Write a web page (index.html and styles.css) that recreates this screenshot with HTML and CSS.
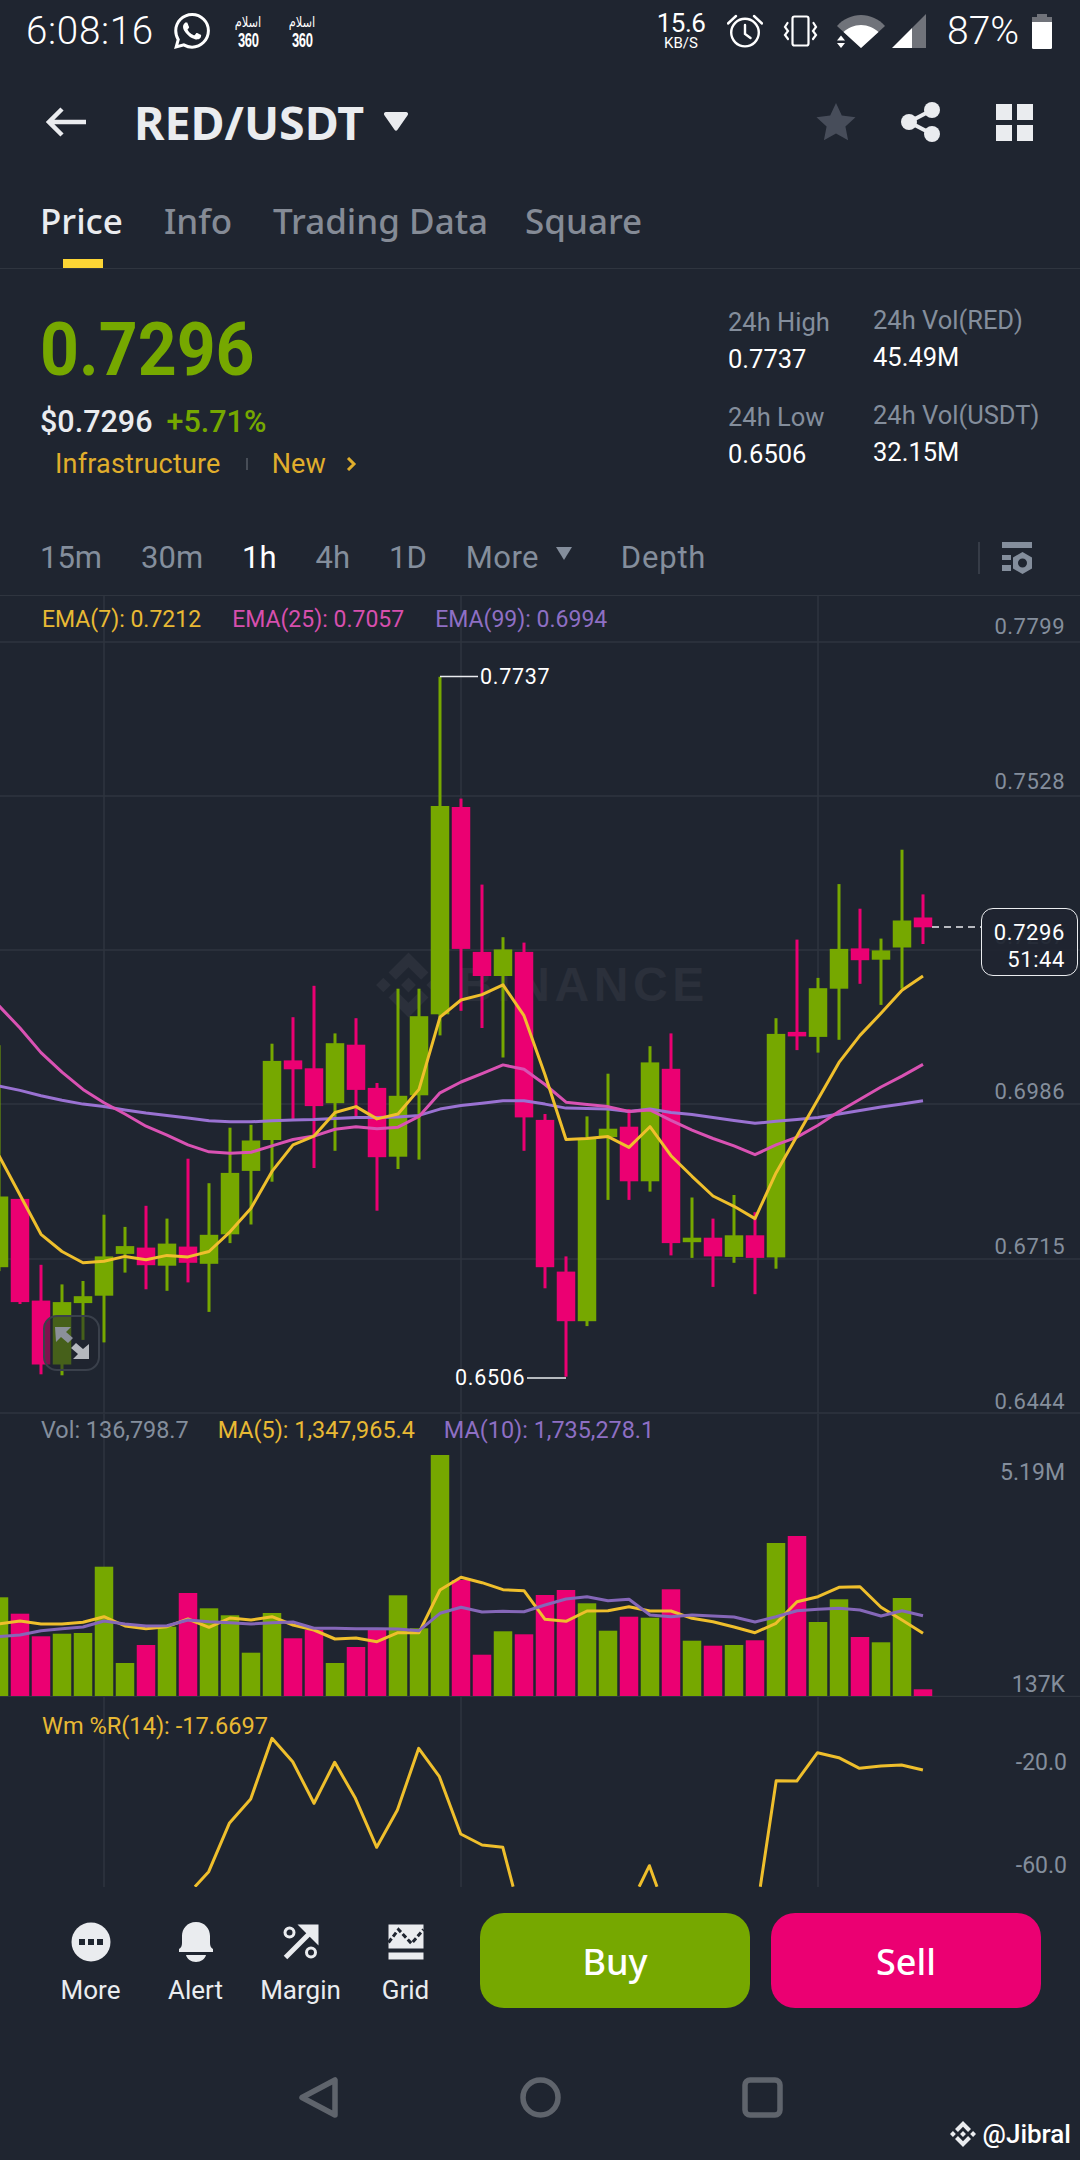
FILE: index.html
```html
<!DOCTYPE html>
<html lang="en">
<head>
<meta charset="utf-8">
<title>RED/USDT</title>
<link rel="stylesheet" href="styles.css">
</head>
<body>
<div class="app">
  <div class="status">
    <span class="clock">6:08:16</span>
    <svg class="i-wa" viewBox="0 0 24 24"><path fill="#fff" d="M17.472 14.382c-.297-.149-1.758-.867-2.03-.967-.273-.099-.471-.148-.67.15-.197.297-.767.966-.94 1.164-.173.199-.347.223-.644.075-.297-.15-1.255-.463-2.39-1.475-.883-.788-1.48-1.761-1.653-2.059-.173-.297-.018-.458.13-.606.134-.133.298-.347.446-.52.149-.174.198-.298.298-.497.099-.198.05-.371-.025-.52-.075-.149-.669-1.612-.916-2.207-.242-.579-.487-.5-.669-.51-.173-.008-.371-.01-.57-.01-.198 0-.52.074-.792.372-.272.297-1.04 1.016-1.04 2.479 0 1.462 1.065 2.875 1.213 3.074.149.198 2.096 3.2 5.077 4.487.709.306 1.262.489 1.694.625.712.227 1.36.195 1.871.118.571-.085 1.758-.719 2.006-1.413.248-.694.248-1.289.173-1.413-.074-.124-.272-.198-.57-.347m-5.421 7.403h-.004a9.87 9.87 0 01-5.031-1.378l-.361-.214-3.741.982.998-3.648-.235-.374a9.86 9.86 0 01-1.51-5.26c.001-5.45 4.436-9.884 9.888-9.884 2.64 0 5.122 1.03 6.988 2.898a9.825 9.825 0 012.893 6.994c-.003 5.45-4.437 9.884-9.885 9.884m8.413-18.297A11.815 11.815 0 0012.05 0C5.495 0 .16 5.335.157 11.892c0 2.096.547 4.142 1.588 5.945L.057 24l6.305-1.654a11.882 11.882 0 005.683 1.448h.005c6.554 0 11.89-5.335 11.893-11.893a11.821 11.821 0 00-3.48-8.413z"/></svg>
    <span class="islam"><span class="islam-ar">اسلام</span><span class="islam-num">360</span></span>
    <span class="islam islam-2"><span class="islam-ar">اسلام</span><span class="islam-num">360</span></span>
    <span class="speed"><span class="speed-val">15.6</span><span class="speed-unit">KB/S</span></span>
    <svg class="i-alarm" viewBox="0 0 36 34" fill="none" stroke="#fff" stroke-width="2.4"><circle cx="18" cy="18.600" r="13.800"/><path d="M18 11v9l5.500 4M1 9.500 9 2M35 9.500 27 2" stroke-linecap="round"/></svg>
    <svg class="i-vib" viewBox="0 0 35 32" fill="none" stroke="#fff" stroke-width="2.2"><rect x="9.500" y="1.500" width="16" height="29" rx="2"/><path d="M4.500 8 2 12l3 4-3 4 3 4M30.500 8l2.500 4-3 4 3 4-3 4" stroke-linecap="round"/></svg>
    <svg class="i-wifi" viewBox="0 0 48 33"><path fill="#70737a" d="M24 33 0 11C6 4 15 0 24 0s18 4 24 11z"/><path fill="#fff" d="M24 33 6.500 17C11 13 17 10 24 10s13 3 17.500 7zM0 25.500h8l-4-5zM0 28h8l-4 5z"/></svg>
    <svg class="i-signal" viewBox="0 0 34 34"><path fill="#70737a" d="M34 0v34H20V14z"/><path fill="#fff" d="M20 14v20H0z"/></svg>
    <span class="pct">87%</span>
    <svg class="i-batt" viewBox="0 0 20 35"><path fill="#70737a" d="M5 0h10v3h5v5H0V3h5z"/><path fill="#fff" d="M0 8h20v25.500a1.500 1.500 0 0 1-1.500 1.500h-17A1.500 1.500 0 0 1 0 33.500z"/></svg>
  </div>

  <div class="topbar">
    <svg class="i-back" viewBox="0 0 40 30" fill="none" stroke="#eaecef" stroke-width="4.500"><path d="M40 15H4M16 2 3 15l13 13"/></svg>
    <span class="pair">RED/USDT</span>
    <svg class="i-caret" viewBox="0 0 24 19"><path fill="#eaecef" d="M2 0h20a2 2 0 0 1 1.600 3.200L13.500 17.800a2 2 0 0 1-3 0L.4 3.200A2 2 0 0 1 2 0z"/></svg>
    <svg class="i-star" viewBox="0 0 40 40"><path fill="#474d5a" d="m20 1 5.800 12.600 13.700 1.600-10.100 9.400 2.700 13.600L20 31.400 7.900 38.200l2.700-13.600L.5 15.200l13.700-1.600z"/></svg>
    <svg class="i-share" viewBox="0 0 40 40"><g fill="#eaecef"><circle cx="31" cy="8" r="8"/><circle cx="8" cy="20" r="8"/><circle cx="31" cy="32" r="8"/></g><path d="M31 8 8 20l23 12" fill="none" stroke="#eaecef" stroke-width="4"/></svg>
    <svg class="i-grid" viewBox="0 0 37 37"><path fill="#eaecef" d="M0 0h16v16H0zM21 0h16v16H21zM0 21h16v16H0zM21 21h16v16H21z"/></svg>
  </div>

  <div class="tabs">
    <span class="tab tab-on">Price</span>
    <span class="tab">Info</span>
    <span class="tab">Trading Data</span>
    <span class="tab tab-last">Square</span>
    <span class="tab-mark"></span>
  </div>

  <div class="ticker">
    <div class="quote">
      <div class="last">0.7296</div>
      <div class="fiat"><span>$0.7296</span><span class="up">+5.71%</span></div>
      <div class="tags">
        <span>Infrastructure</span><i class="tag-sep"></i><span>New</span>
        <svg class="i-chev" viewBox="0 0 12 14" fill="none" stroke="#e0ae2c" stroke-width="3"><path d="m2 1 6 6-6 6"/></svg>
      </div>
    </div>
    <div class="stats stats-a">
      <div class="stat"><span class="stat-k">24h High</span><span class="stat-v">0.7737</span></div>
      <div class="stat"><span class="stat-k">24h Low</span><span class="stat-v">0.6506</span></div>
    </div>
    <div class="stats stats-b">
      <div class="stat"><span class="stat-k">24h Vol(RED)</span><span class="stat-v">45.49M</span></div>
      <div class="stat"><span class="stat-k">24h Vol(USDT)</span><span class="stat-v">32.15M</span></div>
    </div>
  </div>

  <div class="intervals">
    <span>15m</span><span>30m</span><span class="iv-on">1h</span><span>4h</span><span>1D</span>
    <span class="iv-more">More<svg class="i-tri" viewBox="0 0 16 13"><path fill="#848e9c" d="M0 0h16L8 13z"/></svg></span>
    <span class="iv-depth">Depth</span>
    <span class="iv-tool">
      <svg class="i-tune" viewBox="0 0 32 32"><path fill="#848e9c" d="M1 0h30v6H1zM1 13h9v5H1zM1 23h9v6H1z"/><path fill="#848e9c" fill-rule="evenodd" d="M21.500 10 31 15.500v11L21.500 32 12 26.500v-11zM21.500 16.500a4.500 4.500 0 1 0 0 9 4.500 4.500 0 0 0 0-9z"/></svg>
    </span>
  </div>

  <div class="chart">
    <section class="panel panel-price">
      <div class="mark"><svg class="mark-logo" viewBox="0 0 24 24"><path fill="#2b303b" d="M7.340 10.080 12 5.420l4.660 4.660 2.710-2.710L12 0 4.630 7.370zM0 12l2.710-2.710L5.420 12l-2.710 2.710zM7.340 13.920 12 18.580l4.660-4.660 2.710 2.710L12 24l-7.370-7.370zM18.580 12l2.710-2.710L24 12l-2.710 2.710zM14.750 12 12 9.250 9.250 12 12 14.750z"/></svg><span class="mark-text">BINANCE</span></div>
      <svg class="plot" id="plot-price" viewBox="0 596 1080 818" preserveAspectRatio="none"></svg>
      <div class="legend legend-price"><span class="c-y">EMA(7): 0.7212</span><span class="c-m">EMA(25): 0.7057</span><span class="c-p">EMA(99): 0.6994</span></div>
      <div class="axis axis-price"><span>0.7799</span><span>0.7528</span><span>0.7257</span><span>0.6986</span><span>0.6715</span><span>0.6444</span></div>
      <span class="extreme extreme-hi">0.7737</span>
      <span class="extreme extreme-lo">0.6506</span>
      <div class="pricetag"><span>0.7296</span><span>51:44</span></div>
      <div class="expand"><svg viewBox="0 0 36 34"><path fill="#8b909a" d="M1 1h16l-5 5 7 6-5 5-7-6-5 5z"/><path fill="#b5b8be" d="M35 33H19l5-5-7-6 5-5 7 6 6-5z"/></svg></div>
    </section>
    <section class="panel panel-vol">
      <svg class="plot" id="plot-vol" viewBox="0 1414 1080 283" preserveAspectRatio="none"></svg>
      <div class="legend legend-vol"><span class="c-g">Vol: 136,798.7</span><span class="c-y">MA(5): 1,347,965.4</span><span class="c-p">MA(10): 1,735,278.1</span></div>
      <div class="axis axis-vol"><span>5.19M</span><span>137K</span></div>
    </section>
    <section class="panel panel-wr">
      <svg class="plot" id="plot-wr" viewBox="0 1697 1080 190" preserveAspectRatio="none"></svg>
      <div class="legend legend-wr"><span class="c-y">Wm %R(14): -17.6697</span></div>
      <div class="axis axis-wr"><span>-20.0</span><span>-60.0</span></div>
    </section>
  </div>

  <div class="actions">
    <div class="tools">
      <div class="tool"><svg class="tool-i" viewBox="0 0 40 40"><circle cx="20" cy="20" r="19.500" fill="#eaecef"/><path fill="#1f2530" d="M8 17h6v6H8zM17 17h6v6h-6zM26 17h6v6h-6z"/></svg><span>More</span></div>
      <div class="tool"><svg class="tool-i" viewBox="0 0 40 40"><path fill="#eaecef" d="M20 0C11 0 6 7 6 14v7c0 3-1 5-3 6v3h34v-3c-2-1-3-3-3-6v-7C34 7 29 0 20 0zM10 33h20c-1 4-5 7-10 7s-9-3-10-7z"/></svg><span>Alert</span></div>
      <div class="tool"><svg class="tool-i" viewBox="-2.500 -2.500 40 40"><g fill="none" stroke="#eaecef"><path d="M2 33 30 5" stroke-width="5"/><circle cx="6" cy="8" r="4.500" stroke-width="3"/><circle cx="27.500" cy="28" r="4.500" stroke-width="3"/></g><path fill="#eaecef" d="M14 0h21v21z"/></svg><span>Margin</span></div>
      <div class="tool"><svg class="tool-i" viewBox="-2.500 -2.500 40 40"><path fill="#eaecef" d="M0 0h35v24H0zM0 28h35v7H0z"/><path fill="none" stroke="#1f2530" stroke-width="3" stroke-dasharray="5 2.500" d="M0 18 10 5l13 14L35 5"/></svg><span>Grid</span></div>
    </div>
    <button class="trade trade-buy">Buy</button>
    <button class="trade trade-sell">Sell</button>
  </div>

  <div class="sysnav">
    <svg class="sys-i" viewBox="0 0 41 41" fill="none" stroke="#5f646c" stroke-width="5.500" stroke-linejoin="round"><path d="M37 3v35L4 20.500z"/></svg>
    <svg class="sys-i" viewBox="0 0 41 41" fill="none" stroke="#5f646c" stroke-width="5.500"><circle cx="20.500" cy="20.500" r="17.500"/></svg>
    <svg class="sys-i" viewBox="0 0 41 41" fill="none" stroke="#5f646c" stroke-width="5.500"><rect x="3" y="3" width="35" height="35" rx="5"/></svg>
    <div class="credit"><svg class="credit-logo" viewBox="0 0 24 24"><path fill="#eaecef" d="M7.340 10.080 12 5.420l4.660 4.660 2.710-2.710L12 0 4.630 7.370zM0 12l2.710-2.710L5.420 12l-2.710 2.710zM7.340 13.920 12 18.580l4.660-4.660 2.710 2.710L12 24l-7.370-7.370zM18.580 12l2.710-2.710L24 12l-2.710 2.710zM14.750 12 12 9.250 9.250 12 12 14.750z"/></svg><span>@Jibral</span></div>
  </div>
</div>
<script src="chart.js"></script>
</body>
</html>
```
FILE: styles.css
```css
* { box-sizing: border-box; }
html, body { margin: 0; padding: 0; }
body { background: #1f2530; }
.app {
  width: 1080px; height: 2160px; background: #1f2530; overflow: hidden;
  display: flex; flex-direction: column;
  font-family: Roboto, "Liberation Sans", sans-serif; color: #eaecef;
}
svg { display: block; flex: none; }

/* status bar */
.status { height: 74px; padding: 0 28px 12px 26px; display: flex; align-items: center; color: #fff; flex: none; }
.clock { font-size: 38.5px; font-weight: 300; line-height: 40px; width: 126px; letter-spacing: .7px; white-space: nowrap; }
.i-wa { width: 36px; height: 36px; margin-left: 22px; }
.islam { width: 28px; margin-left: 24px; display: flex; flex-direction: column; align-items: center; gap: 4px; }
.islam-2 { margin-left: 26px; }
.islam-ar { font: 12px/14px "DejaVu Sans", sans-serif; white-space: nowrap; transform: scale(.95, 1.2); }
.islam-num { font: 700 18px/15px "Liberation Sans", sans-serif; letter-spacing: -.5px; transform: scale(.72, 1.15); }
.speed { margin-left: auto; width: 46px; display: flex; flex-direction: column; align-items: center; }
.speed-val { font-size: 26px; line-height: 22px; letter-spacing: -.5px; }
.speed-unit { font-size: 15px; line-height: 14px; margin-top: 2px; }
.i-alarm { width: 36px; height: 34px; margin-left: 23px; }
.i-vib { width: 35px; height: 32px; margin-left: 20px; }
.i-wifi { width: 48px; height: 33px; margin-left: 19px; }
.i-signal { width: 34px; height: 34px; margin-left: 7px; }
.pct { font-size: 39px; font-weight: 300; line-height: 40px; margin-left: 21px; width: 71px; white-space: nowrap; }
.i-batt { width: 20px; height: 35px; margin-left: 14px; }

/* top bar */
.topbar { height: 96px; padding: 0 47px 0 46px; display: flex; align-items: center; flex: none; }
.i-back { width: 40px; height: 30px; }
.pair { font: 700 46.5px/56px "Noto Sans", sans-serif; margin-left: 48px; width: 229px; white-space: nowrap; }
.i-caret { width: 24px; height: 19px; margin-left: 21px; margin-bottom: 2px; }
.i-star { width: 40px; height: 40px; margin-left: auto; }
.i-share { width: 40px; height: 40px; margin-left: 45px; }
.i-grid { width: 37px; height: 37px; margin-left: 55px; }

/* tabs */
.tabs { position: relative; height: 99px; padding: 4px 0 0 40px; border-bottom: 1px solid #2f353f; display: flex; align-items: center; gap: 41px; font: 500 35px/44px "Noto Sans", sans-serif; color: #858b96; flex: none; }
.tab-on { color: #eaecef; }
.tab-last { margin-left: -4px; }
.tab-mark { position: absolute; left: 63px; bottom: 0; width: 40px; height: 9px; background: #fcd535; }

/* ticker */
.ticker { height: 261px; display: flex; flex: none; }
.quote { width: 728px; padding: 45px 0 0 40px; flex: none; }
.last { font-size: 74px; line-height: 72px; font-weight: 700; color: #76a800; transform: scaleX(.918); transform-origin: left center; }
.fiat { margin-top: 18px; font-size: 30.5px; line-height: 36px; font-weight: 500; display: flex; gap: 14px; }
.up { color: #76a800; }
.tags { margin: 9px 0 0 15px; font-size: 27px; letter-spacing: .2px; line-height: 30px; color: #e0ae2c; display: flex; align-items: center; }
.tag-sep { width: 2px; height: 12px; background: #474d57; margin: 0 24px 0 25px; }
.i-chev { width: 12px; height: 14px; margin-left: 20px; }
.stats { display: flex; flex-direction: column; gap: 28px; flex: none; }
.stats-a { width: 145px; padding-top: 38px; }
.stats-b { padding-top: 36px; }
.stat { display: flex; flex-direction: column; gap: 7px; white-space: nowrap; }
.stat-k { font-size: 25.5px; line-height: 30px; color: #848e9c; }
.stat-v { font-size: 25.5px; line-height: 30px; color: #fff; }

/* intervals */
.intervals { height: 66px; padding: 0 47px 9px 40px; border-bottom: 1px solid #2f353f; display: flex; align-items: center; gap: 39px; font-size: 31px; line-height: 36px; color: #848e9c; flex: none; }
.iv-on { color: #fff; }
.iv-more { display: flex; align-items: flex-start; gap: 17px; letter-spacing: .4px; }
.i-tri { width: 16px; height: 13px; margin-top: 7px; }
.iv-depth { margin-left: 10px; letter-spacing: .8px; }
.iv-tool { margin-left: auto; height: 32px; padding-left: 21px; border-left: 2px solid #363c47; }
.i-tune { width: 32px; height: 32px; }

/* chart */
.chart { height: 1291px; display: flex; flex-direction: column; flex: none; }
.panel { position: relative; flex: none; }
.panel-price { height: 818px; }
.panel-vol { height: 283px; }
.panel-wr { height: 190px; }
.plot { position: absolute; inset: 0; width: 100%; height: 100%; }
.legend { position: relative; padding-left: 42px; display: flex; gap: 31px; font-size: 23px; line-height: 24px; white-space: nowrap; }
.legend-price { padding-top: 12px; }
.legend-vol { padding: 4px 0 0 41px; gap: 29px; font-size: 23.4px; }
.legend-wr { padding-top: 17px; font-size: 23.6px; }
.c-y { color: #e8b934; }
.c-m { color: #d74fae; }
.c-p { color: #8e6fc4; }
.c-g { color: #848e9c; }
.axis { position: absolute; right: 15px; display: flex; flex-direction: column; align-items: flex-end; font-size: 22px; line-height: 24px; color: #848e9c; letter-spacing: .5px; }
.axis-price { top: 19px; gap: 131px; }
.axis-vol { top: 47px; gap: 188px; font-size: 23px; letter-spacing: 0; }
.axis-wr { top: 54px; gap: 79px; font-size: 23px; letter-spacing: 0; right: 13px; }
.extreme { position: absolute; font-size: 21.5px; line-height: 24px; letter-spacing: .7px; color: #fff; }
.extreme-hi { left: 480px; top: 69px; }
.extreme-lo { left: 455px; top: 770px; }
.pricetag { position: absolute; left: 981px; top: 312px; width: 97px; height: 68px; padding: 10px 12px 0 0; border: 1.5px solid #eaecef; border-radius: 12px; background: rgba(31, 37, 48, .93); display: flex; flex-direction: column; align-items: flex-end; font-size: 22px; line-height: 27px; letter-spacing: .6px; color: #fff; }
.expand { position: absolute; left: 43px; top: 719px; width: 57px; height: 56px; border: 2px solid #3a404b; border-radius: 14px; background: rgba(31, 37, 48, .55); display: flex; align-items: center; justify-content: center; }
.expand svg { width: 36px; height: 34px; }
.mark { position: absolute; left: 376px; top: 356px; display: flex; align-items: center; gap: 17px; }
.mark-logo { width: 65px; height: 66px; }
.mark-text { font: 700 48px/50px "Liberation Sans", sans-serif; letter-spacing: 4.6px; color: #2b303b; }

/* actions */
.actions { height: 153px; padding: 26px 0 0 38px; display: flex; align-items: flex-start; flex: none; }
.tools { display: flex; width: 442px; flex: none; }
.tool { width: 105px; padding-top: 9px; display: flex; flex-direction: column; align-items: center; gap: 13px; font-size: 26px; line-height: 30px; color: #eaecef; }
.tool-i { width: 40px; height: 40px; }
.trade { width: 270px; height: 95px; border: 0; border-radius: 24px; color: #fff; font: 500 36px/44px "Noto Sans", sans-serif; padding: 3px 0 0; flex: none; }
.trade-buy { background: #76a800; }
.trade-sell { background: #eb0072; margin-left: 21px; }

/* system nav */
.sysnav { position: relative; height: 120px; padding-bottom: 5px; display: flex; align-items: center; justify-content: center; gap: 181px; flex: none; }
.sys-i { width: 41px; height: 41px; }
.credit { position: absolute; right: 9px; bottom: 10px; display: flex; align-items: center; gap: 7px; font-size: 26px; font-weight: 500; line-height: 32px; color: #fff; }
.credit-logo { width: 26px; height: 26px; }
```
FILE: chart.js
```js
(function () {
  var GREEN = '#76a800', PINK = '#eb0072', GRID = '#2f353f';
  var cx = function (i) { return 440 + (i - 20) * 21; };
  var py = function (v) { return +(640 + v / 2.036).toFixed(1); };
  var vy = function (v) { return +(1400 + v / 3).toFixed(1); };
  var wy = function (v) { return +(1690 + v / 3).toFixed(1); };

  // type, wick top, body top, body bottom, wick bottom
  var candles = [
    ['g',825,1133,1277,1285],['r',1138,1138,1348,1352],['r',1272,1345,1475,1495],['g',1312,1348,1475,1497],
    ['g',1305,1336,1350,1425],['g',1170,1255,1335,1430],['g',1195,1234,1250,1288],['r',1152,1237,1273,1322],
    ['g',1178,1229,1274,1325],['r',1056,1235,1268,1308],['g',1106,1211,1270,1368],['g',993,1085,1210,1228],
    ['g',987,1019,1081,1190],['g',822,857,1018,1103],['r',768,856,874,975],['r',704,872,949,1075],
    ['g',801,821,943,1040],['r',770,824,916,970],['r',902,912,1053,1162],['g',710,928,1052,1077],
    ['g',710,766,927,1058],['g',75,338,762,805],['r',323,340,629,755],['r',498,635,684,790],
    ['g',605,630,684,850],['r',616,635,972,1040],['r',965,977,1277,1320],['r',1255,1286,1387,1500],
    ['g',970,1015,1387,1397],['g',883,995,1012,1140],['r',955,991,1102,1140],['g',827,860,1102,1123],
    ['r',801,873,1228,1253],['g',1135,1217,1226,1258],['r',1178,1217,1255,1317],['g',1130,1212,1256,1268],
    ['r',1165,1212,1258,1332],['g',770,802,1257,1280],['r',610,798,807,835],['g',688,709,808,840],
    ['g',497,629,710,814],['r',547,628,652,700],['g',608,632,651,743],['g',427,571,626,710],
    ['r',518,565,585,619]
  ];
  var ema7 = [1050,1130,1210,1245,1268,1265,1255,1262,1253,1256,1245,1205,1157,1082,1028,1010,962,950,975,965,915,768,733,722,702,765,885,1017,1015,1011,1033,991,1050,1092,1132,1153,1178,1085,1010,935,860,805,760,713,684];
  var ema25 = [745,790,840,880,915,942,965,990,1008,1028,1042,1045,1043,1030,1017,1010,996,991,995,992,970,922,900,883,865,874,905,941,946,950,960,957,978,998,1015,1030,1048,1028,1012,988,960,935,910,888,864];
  var ema99 = [908,917,928,937,945,950,957,963,968,973,979,981,981,979,977,976,974,972,972,971,968,955,948,943,938,938,945,953,954,955,960,955,962,966,972,978,984,980,976,972,965,958,951,945,938];

  // type, bar top in crop units
  var bars = [['g',592],['r',641],['r',709],['g',701],['g',699],['g',500],['g',789],['r',735],['g',680],['r',579],['g',625],['g',646],['g',758],['g',639],['r',715],['r',690],['g',789],['r',741],['r',690],['g',586],['g',685],['g',165],['r',540],['r',764],['g',694],['r',703],['r',585],['r',570],['g',610],['g',692],['r',650],['g',653],['r',568],['g',722],['r',737],['g',735],['r',721],['g',429],['r',408],['g',666],['g',598],['r',711],['g',727],['g',594],['r',868]];
  var ma5 = [672,663,672,672,667,650,678,686,680,657,682,654,660,650,675,690,717,714,725,698,698,570,532,548,569,572,658,664,633,632,620,633,633,655,665,681,698,670,605,590,562,560,622,660,700];
  var ma10 = [710,705,692,686,681,663,672,678,677,660,665,668,672,668,666,685,685,686,686,687,692,640,622,636,634,635,615,597,590,602,598,645,650,645,648,651,666,650,632,628,625,630,648,632,647];

  var wr = [
    [[283,590],[303,545],[333,400],[364,327],[395,145],[425,215],[456,340],[486,217],[516,325],[547,472],[577,360],[608,175],[638,260],[669,432],[700,465],[730,472],[745,590]],
    [[928,590],[943,527],[954,590]],
    [[1104,590],[1127,272],[1157,273],[1187,188],[1218,203],[1248,235],[1279,228],[1309,225],[1340,240]]
  ];

  function line(x1, y1, x2, y2, c, w, extra) {
    return '<line x1="' + x1 + '" y1="' + y1 + '" x2="' + x2 + '" y2="' + y2 + '" stroke="' + c + '" stroke-width="' + w + '"' + (extra || '') + '/>';
  }
  function rect(x, y, w, h, c) {
    return '<rect x="' + x + '" y="' + y + '" width="' + w + '" height="' + h + '" fill="' + c + '"/>';
  }
  function poly(points, c, w) {
    return '<polyline fill="none" stroke-linejoin="round" stroke="' + c + '" stroke-width="' + w + '" points="' + points + '"/>';
  }
  function series(arr, f) {
    return arr.map(function (v, k) { return cx(k - 1) + ',' + f(v); }).join(' ');
  }
  function vlines(y1, y2) {
    return [104, 461, 818].map(function (x) { return line(x, y1, x, y2, GRID, 1.5); }).join('');
  }

  // price panel
  var s = '';
  [642, 796, 950, 1104, 1259, 1413].forEach(function (y) { s += line(0, y, 1080, y, GRID, 1.5); });
  s += vlines(596, 1413);
  candles.forEach(function (c, k) {
    var x = cx(k - 1), col = c[0] === 'g' ? GREEN : PINK;
    s += rect(x - 1.5, py(c[1]), 3, py(c[4]) - py(c[1]), col);
    s += rect(x - 9.25, py(c[2]), 18.5, py(c[3]) - py(c[2]), col);
  });
  s += poly(series(ema99, py), '#9a72d2', 3);
  s += poly(series(ema25, py), '#d952b3', 3);
  s += poly(series(ema7, py), '#efbf2c', 3);
  s += line(440, 676.5, 478, 676.5, '#eaecef', 1.5);
  s += line(527, 1378, 566, 1378, '#eaecef', 1.5);
  s += line(932, 927, 981, 927, '#eaecef', 1.5, ' stroke-dasharray="7 5"');
  document.getElementById('plot-price').innerHTML = s;

  // volume panel
  s = vlines(1414, 1696) + line(0, 1696.5, 1080, 1696.5, GRID, 1.5);
  bars.forEach(function (b, k) {
    var x = cx(k - 1);
    s += rect(x - 9.25, vy(b[1]), 18.5, 1696 - vy(b[1]), b[0] === 'g' ? GREEN : PINK);
  });
  s += poly(series(ma5, vy), '#efbf2c', 3);
  s += poly(series(ma10, vy), '#8567b8', 3);
  document.getElementById('plot-vol').innerHTML = s;

  // Williams %R panel
  s = vlines(1697, 1887);
  wr.forEach(function (seg) {
    s += poly(seg.map(function (p) { return (p[0] / 1.452).toFixed(1) + ',' + wy(p[1]); }).join(' '), '#efbf2c', 3);
  });
  document.getElementById('plot-wr').innerHTML = s;
})();
```
